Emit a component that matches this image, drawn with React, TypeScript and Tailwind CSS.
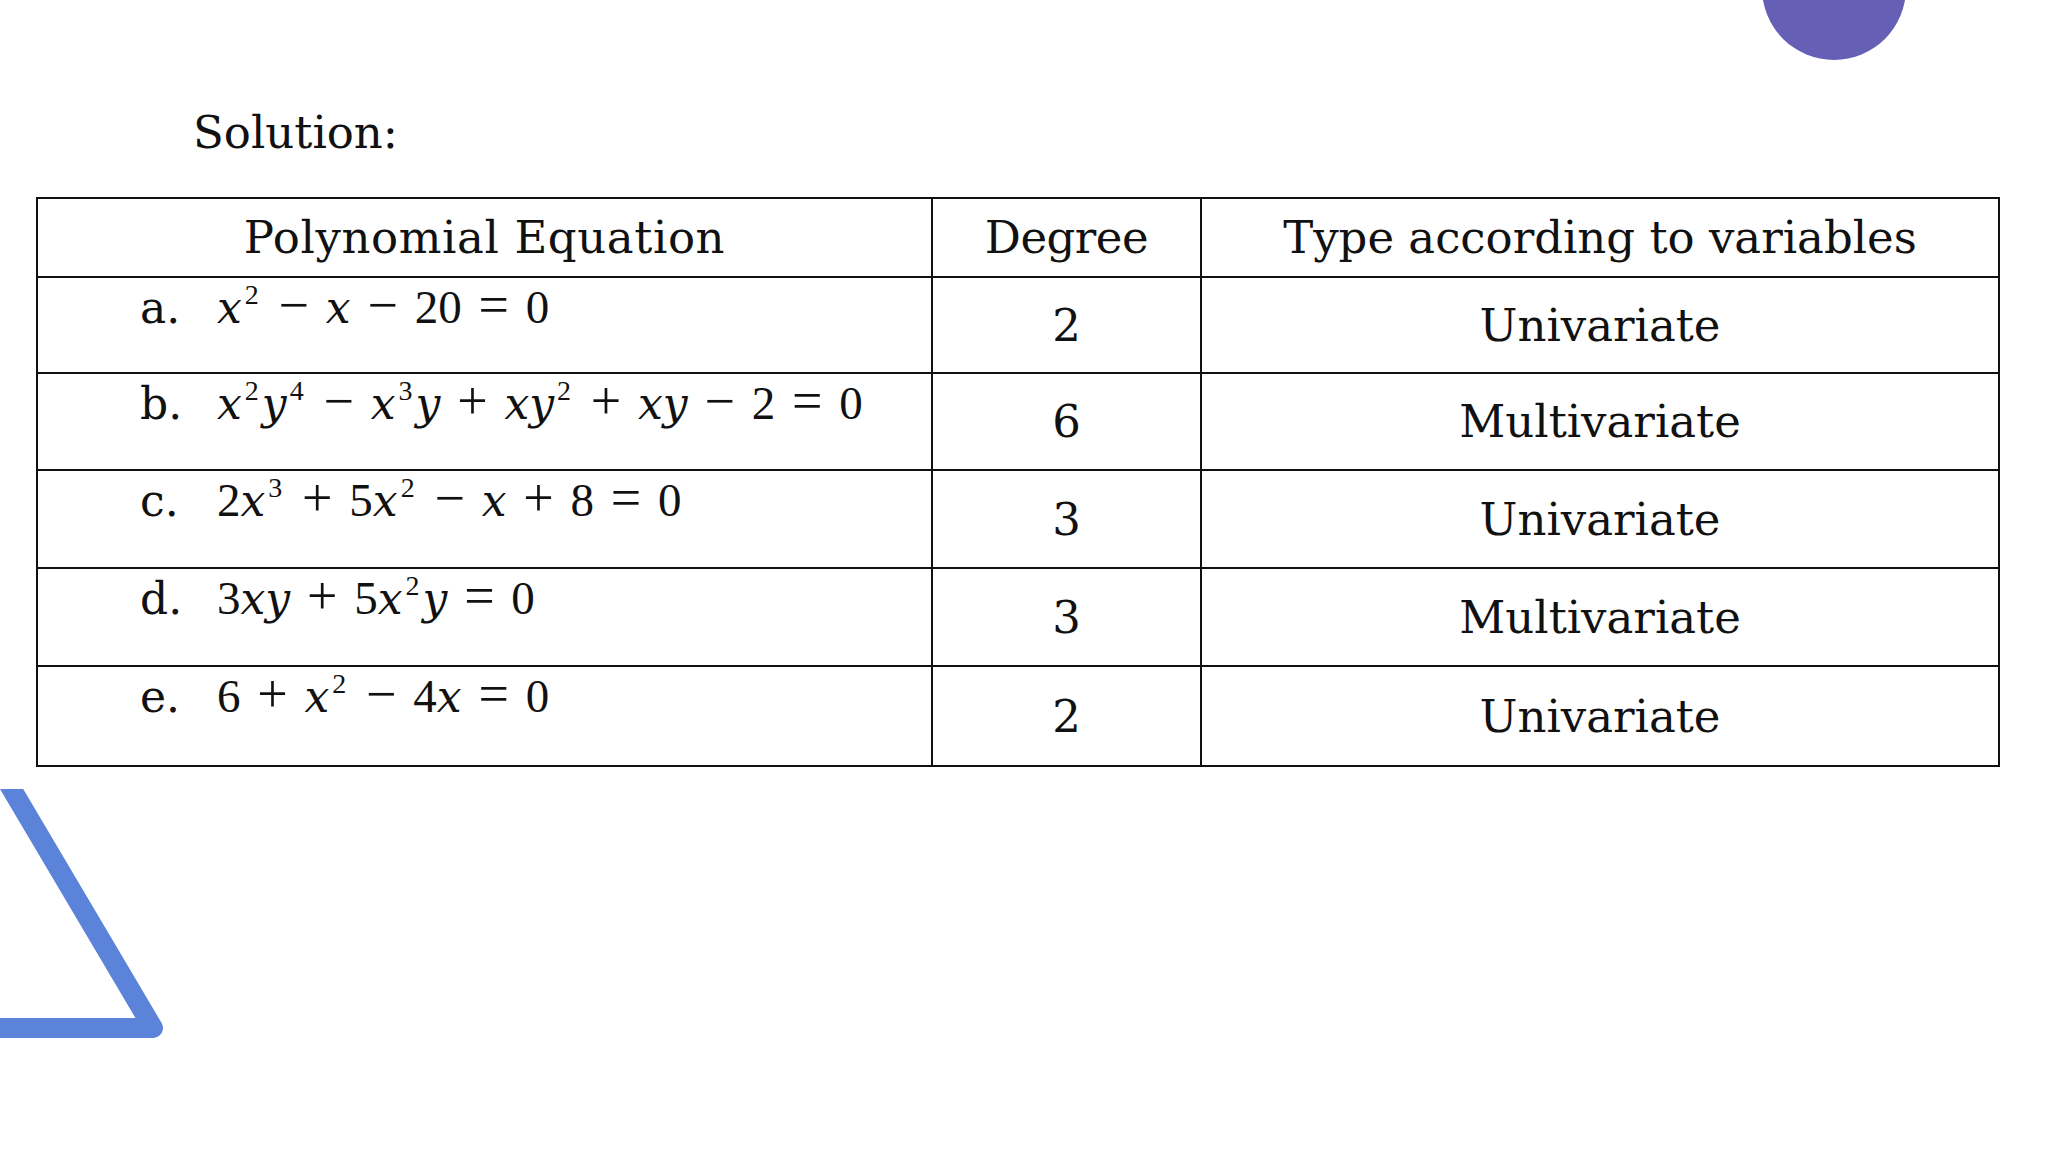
import React from "react";

const serif = "font-['DejaVu_Serif',serif]";
const num = "font-['Liberation_Serif',serif] text-[47px]";

function Sup({ children }: { children: React.ReactNode }) {
  return (
    <span className="font-['Liberation_Serif',serif] align-[19px] text-[28px] not-italic ml-[3px] mr-[3px] leading-none">
      {children}
    </span>
  );
}
function V({ children }: { children: React.ReactNode }) {
  return <span className="font-['DejaVu_Serif',serif] italic text-[44px]">{children}</span>;
}
function N({ children }: { children: React.ReactNode }) {
  return <span className={num}>{children}</span>;
}
function Op({ children }: { children: React.ReactNode }) {
  return (
    <span className="font-['Liberation_Serif',serif] inline-block w-[64px] text-center text-[54px] leading-none">
      {children}
    </span>
  );
}

type Row = { label: string; eq: React.ReactNode; deg: string; type: string };

const rows: Row[] = [
  {
    label: "a.",
    eq: (
      <>
        <V>x</V>
        <Sup>2</Sup>
        <Op>−</Op>
        <V>x</V>
        <Op>−</Op>
        <N>20</N>
        <Op>=</Op>
        <N>0</N>
      </>
    ),
    deg: "2",
    type: "Univariate",
  },
  {
    label: "b.",
    eq: (
      <>
        <V>x</V>
        <Sup>2</Sup>
        <V>y</V>
        <Sup>4</Sup>
        <Op>−</Op>
        <V>x</V>
        <Sup>3</Sup>
        <V>y</V>
        <Op>+</Op>
        <V>xy</V>
        <Sup>2</Sup>
        <Op>+</Op>
        <V>xy</V>
        <Op>−</Op>
        <N>2</N>
        <Op>=</Op>
        <N>0</N>
      </>
    ),
    deg: "6",
    type: "Multivariate",
  },
  {
    label: "c.",
    eq: (
      <>
        <N>2</N>
        <V>x</V>
        <Sup>3</Sup>
        <Op>+</Op>
        <N>5</N>
        <V>x</V>
        <Sup>2</Sup>
        <Op>−</Op>
        <V>x</V>
        <Op>+</Op>
        <N>8</N>
        <Op>=</Op>
        <N>0</N>
      </>
    ),
    deg: "3",
    type: "Univariate",
  },
  {
    label: "d.",
    eq: (
      <>
        <N>3</N>
        <V>xy</V>
        <Op>+</Op>
        <N>5</N>
        <V>x</V>
        <Sup>2</Sup>
        <V>y</V>
        <Op>=</Op>
        <N>0</N>
      </>
    ),
    deg: "3",
    type: "Multivariate",
  },
  {
    label: "e.",
    eq: (
      <>
        <N>6</N>
        <Op>+</Op>
        <V>x</V>
        <Sup>2</Sup>
        <Op>−</Op>
        <N>4</N>
        <V>x</V>
        <Op>=</Op>
        <N>0</N>
      </>
    ),
    deg: "2",
    type: "Univariate",
  },
];

const cell = `${serif} flex items-center justify-center border-r-2 border-b-2 border-[#111] text-[45px] leading-none`;

export default function App() {
  return (
    <div className="relative w-[2048px] h-[1152px] overflow-hidden bg-white text-[#111]">
      {/* decorative circle */}
      <div className="absolute left-[1762px] top-[-84px] w-[144px] h-[144px] rounded-full bg-[#655fb5]" />
      {/* decorative triangle */}
      <svg className="absolute left-0 top-[789px]" width="220" height="270" viewBox="0 0 220 270">
        <path
          d="M -18 -50 L 153 239 L -40 239"
          fill="none"
          stroke="#5b83da"
          strokeWidth="20"
          strokeLinejoin="round"
        />
      </svg>

      <div className="relative flex flex-col pt-[110px] pl-[36px]">
        <div className={`${serif} pl-[157px] text-[45px] leading-none`}>Solution:</div>
        <div className="mt-[42px] grid w-[1964px] grid-cols-[895px_269px_798px] grid-rows-[79px_96px_97px_98px_98px_100px] border-t-2 border-l-2 border-[#111] bg-white">
          <div className={`${cell} tracking-[0.6px]`}>Polynomial Equation</div>
          <div className={`${cell} tracking-[-0.5px]`}>Degree</div>
          <div className={cell}>Type according to variables</div>
          {rows.map((r) => (
            <React.Fragment key={r.label}>
              <div className="border-r-2 border-b-2 border-[#111] pl-[102px]">
                <div className="flex items-baseline leading-[44px] whitespace-nowrap">
                  <span className={`${serif} text-[44px] w-[77px]`}>{r.label}</span>
                  <span>{r.eq}</span>
                </div>
              </div>
              <div className={cell}>{r.deg}</div>
              <div className={cell}>{r.type}</div>
            </React.Fragment>
          ))}
        </div>
      </div>
    </div>
  );
}
